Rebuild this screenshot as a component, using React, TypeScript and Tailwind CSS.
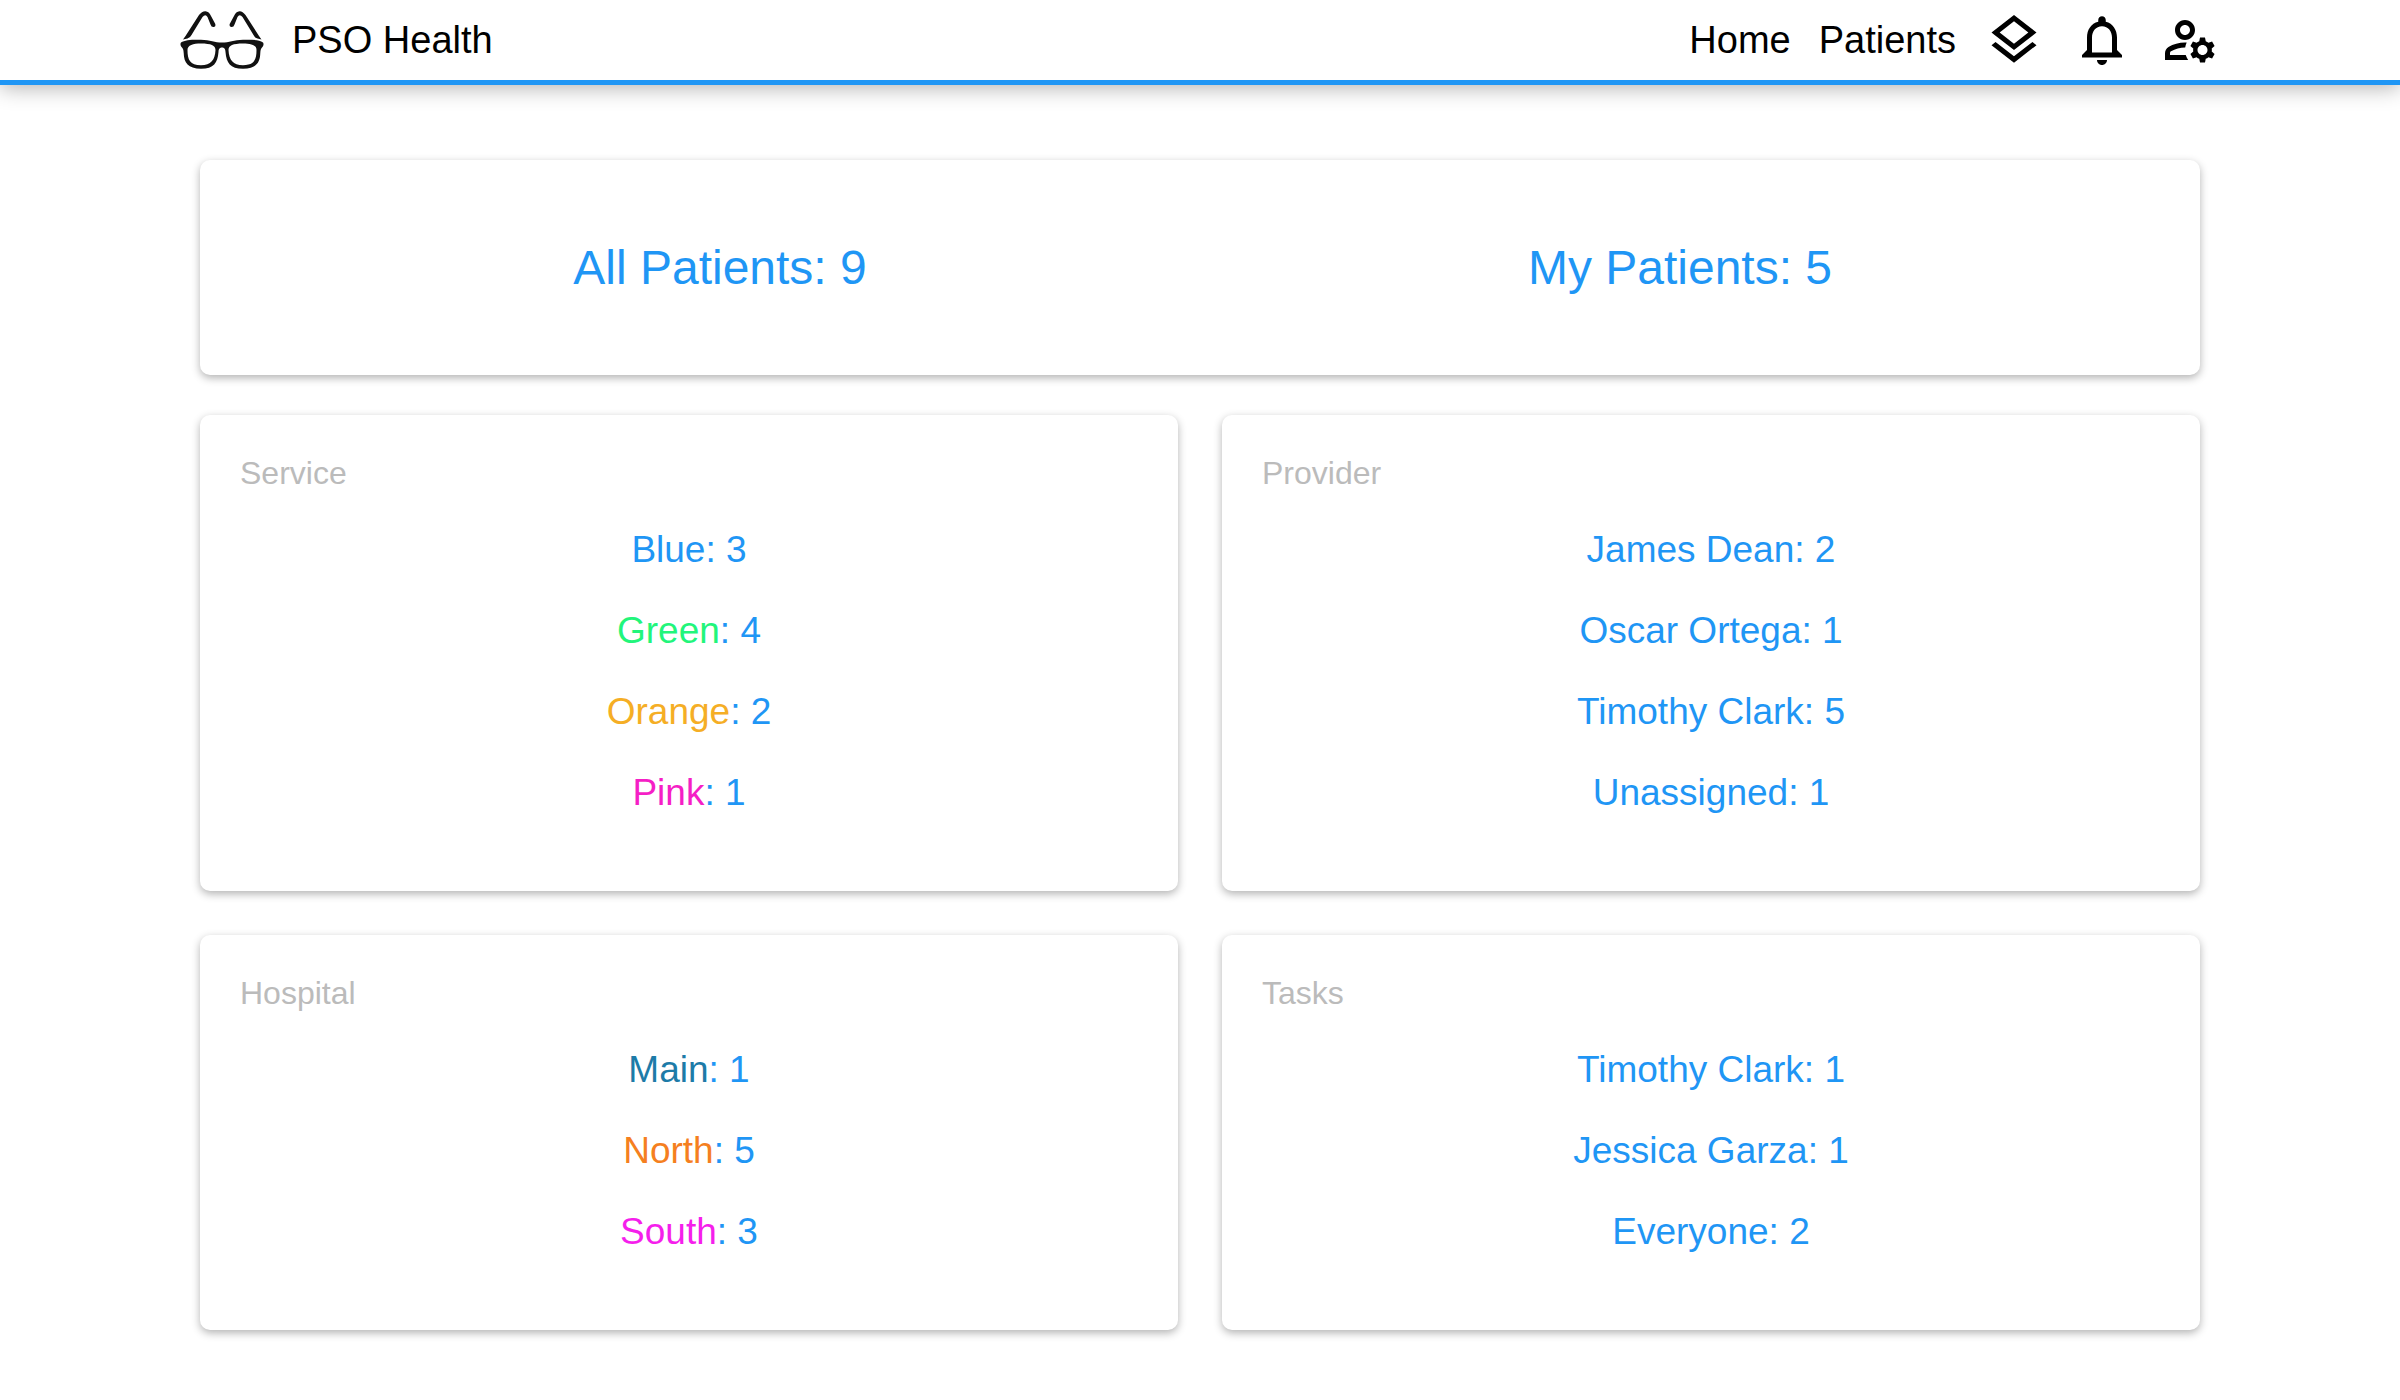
import React from 'react';
import { MdNotificationsNone, MdOutlineLayers, MdOutlineManageAccounts } from 'react-icons/md';

type Row = { name: string; count: number; color?: string };

const service: Row[] = [
    { name: 'Blue', count: 3 },
    { name: 'Green', count: 4, color: 'text-[#22f57b]' },
    { name: 'Orange', count: 2, color: 'text-[#f5ae25]' },
    { name: 'Pink', count: 1, color: 'text-[#f51fc6]' },
];

const provider: Row[] = [
    { name: 'James Dean', count: 2 },
    { name: 'Oscar Ortega', count: 1 },
    { name: 'Timothy Clark', count: 5 },
    { name: 'Unassigned', count: 1 },
];

const hospital: Row[] = [
    { name: 'Main', count: 1, color: 'text-[#1d7ba8]' },
    { name: 'North', count: 5, color: 'text-[#f57f20]' },
    { name: 'South', count: 3, color: 'text-[#f51fec]' },
];

const tasks: Row[] = [
    { name: 'Timothy Clark', count: 1 },
    { name: 'Jessica Garza', count: 1 },
    { name: 'Everyone', count: 2 },
];

const cardClass = 'rounded-[10px] bg-white shadow-[0_3px_8px_rgba(0,0,0,0.3)]';

const Glasses = () => (
    <svg viewBox="0 0 84 60" className="h-[60px] w-[84px]" fill="#111" aria-hidden="true">
        {/* temples */}
        <path d="M3 29.5 L5.5 26 L19 5 Q22 1 25.5 1.2 Q29 1.5 31 6 L35.3 14 Q36 17 33.5 17 Q31.3 17.2 30.5 14.5 L27.5 7 Q25.5 3.5 22.5 7 L11.5 25 Q10 28 7.5 28.5 Z" />
        <path d="M81.5 29.5 L79 26 L65.5 5 Q62.5 1 59.5 1.2 Q56 1.5 54 6 L49.7 14 Q49 17 51.5 17 Q53.7 17.2 54.5 14.5 L57.5 7 Q59.5 3.5 62.5 7 L73.5 25 Q75 28 77.5 28.5 Z" />
        {/* frame */}
        <path
            fillRule="evenodd"
            d="M1 32.5 C5 29.5 14 29.5 21 29.7 C30 30 35 32.5 42 32.5 C49 32.5 54 30 63 29.7 C70 29.5 79 29.5 83 32.5 C84 34 83.5 36 82 37.5 C80.5 39 80.5 41 80.3 43 C80 53 76 58.5 63 58.7 C50 58.7 46.5 53 45.5 42 C45.3 38.5 44 37.5 42 37.5 C40 37.5 38.7 38.5 38.5 42 C37.5 53 34 58.7 21 58.7 C8 58.5 4 53 3.7 43 C3.5 41 3.5 39 2 37.5 C0.5 36 0 34 1 32.5 Z M7.5 40 C7.5 35 13 33.5 21 33.5 C31 33.5 35.5 35.5 35.5 40 C35 50 31 55 21 55.2 C10 55.2 7.5 50 7.5 40 Z M76.5 40 C76.5 35 71 33.5 63 33.5 C53 33.5 48.5 35.5 48.5 40 C49 50 53 55 63 55.2 C74 55.2 76.5 50 76.5 40 Z"
        />
    </svg>
);

function Card({ title, rows }: { title: string; rows: Row[] }) {
    return (
        <section className={`${cardClass} px-10 pt-10 pb-[58px]`}>
            <h2 className="text-[32px] leading-9 text-[#bbb]">{title}</h2>
            <ul className="mt-[18px]">
                {rows.map((row) => (
                    <li key={row.name} className="text-center text-[37px] leading-[81px]">
                        <a href="#">
                            <span className={row.color}>{row.name}</span>: {row.count}
                        </a>
                    </li>
                ))}
            </ul>
        </section>
    );
}

export default function App() {
    return (
        <div className="min-h-screen bg-white font-['Liberation_Sans',Arial,sans-serif] text-[#1f96f5]">
            <header className="border-b-5 border-[#1f96f5] text-black shadow-[0_3px_20px_rgba(0,0,0,0.3)]">
                <div className="mx-auto flex h-20 w-[85%] items-center justify-between">
                    <a href="#" className="flex items-center gap-7 text-[38px]">
                        <Glasses />
                        PSO Health
                    </a>
                    <nav className="flex items-center gap-7 text-[38px]">
                        <a href="#">Home</a>
                        <a href="#">Patients</a>
                        <button type="button" aria-label="Services">
                            <MdOutlineLayers className="size-[60px]" />
                        </button>
                        <button type="button" aria-label="Notifications">
                            <MdNotificationsNone className="size-[60px]" />
                        </button>
                        <button type="button" aria-label="Account settings">
                            <MdOutlineManageAccounts className="size-[60px]" />
                        </button>
                    </nav>
                </div>
            </header>

            <main className="mx-auto w-5/6 pt-[75px] pb-[70px]">
                <section className={`${cardClass} grid grid-cols-2 px-10 py-20 text-center text-[48px] leading-[55px]`}>
                    <a href="#">All Patients: 9</a>
                    <a href="#">My Patients: 5</a>
                </section>
                <div className="mt-10 grid grid-cols-2 gap-11">
                    <Card title="Service" rows={service} />
                    <Card title="Provider" rows={provider} />
                    <Card title="Hospital" rows={hospital} />
                    <Card title="Tasks" rows={tasks} />
                </div>
            </main>
        </div>
    );
}
